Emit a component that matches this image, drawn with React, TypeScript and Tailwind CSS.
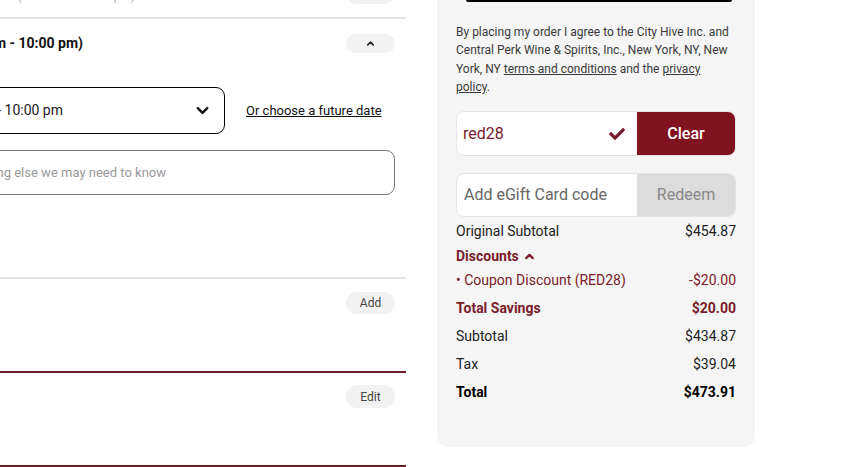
import { ChevronDown, ChevronUp } from 'lucide-react';
import { FaCheck } from 'react-icons/fa';

const maroon = 'text-[#7a1b2b]';

function Pill({ children, className = '' }: { children?: React.ReactNode; className?: string }) {
  return (
    <button
      className={`flex items-center justify-center w-[49px] rounded-full bg-[#f2f2f2] text-[12px] text-[#444] ${className}`}
    >
      {children}
    </button>
  );
}

function Row({
  label,
  value,
  className = '',
  labelClass = '',
}: {
  label: React.ReactNode;
  value?: string;
  className?: string;
  labelClass?: string;
}) {
  return (
    <div className={`h-[20px] flex items-center justify-between text-[14px] ${className}`}>
      <span className={labelClass}>{label}</span>
      {value && <span>{value}</span>}
    </div>
  );
}

export default function App() {
  return (
    <div className="w-[862px] h-[467px] overflow-hidden bg-white flex items-start font-['Roboto','Liberation_Sans',sans-serif] text-[#222]">
      {/* checkout steps */}
      <div className="w-[406px] shrink-0 flex flex-col">
        <div className="h-[17px] flex justify-between items-start">
          <div className="w-[135px] h-[3px] overflow-hidden">
            <div className="-mt-[11px] flex justify-end whitespace-nowrap text-[12px] leading-[14px] text-[#aaa]">
              (10:00 am - 10:00 pm)
            </div>
          </div>
          <Pill className="-mt-[18px] h-[22px] mr-[11px]" />
        </div>
        <div className="h-[2px] bg-[#e2e2e2]" />

        <div className="mt-[15px] h-[19px] flex items-center justify-between">
          <div className="w-[83px] flex justify-end whitespace-nowrap text-[14px] font-bold text-[#111]">
            Today (10:00 am - 10:00 pm)
          </div>
          <Pill className="h-[19px] mr-[11px]">
            <ChevronUp size={11} strokeWidth={3.5} className="text-[#222]" />
          </Pill>
        </div>

        <div className="mt-[34px] flex items-center">
          <div className="-ml-[20px] w-[245px] h-[47px] shrink-0 border border-black rounded-[9px] flex items-center pr-[12px]">
            <div className="w-[82px] flex justify-end whitespace-nowrap text-[14px] text-[#222]">
              Today, 10:00 am - 10:00 pm
            </div>
            <div className="flex-1" />
            <ChevronDown size={19} strokeWidth={3} className="text-[#111]" />
          </div>
          <a className="ml-[21px] text-[13px] underline text-[#111] whitespace-nowrap">Or choose a future date</a>
        </div>

        <div className="mt-[16px] -ml-[20px] w-[415px] h-[45px] border border-[#777] rounded-[9px] flex items-center">
          <div className="w-[185px] flex justify-end whitespace-nowrap text-[13px] text-[#999]">
            Gate code, delivery instructions or anything else we may need to know
          </div>
        </div>

        <div className="mt-[82px] h-[2px] bg-[#e2e2e2]" />
        <Pill className="mt-[13px] h-[22px] self-end mr-[11px]">Add</Pill>
        <div className="mt-[57px] h-[2px] bg-[#6e1d2b]" />
        <Pill className="mt-[12px] h-[23px] self-end mr-[11px]">Edit</Pill>
        <div className="mt-[57px] h-[2px] bg-[#6e1d2b]" />
      </div>

      {/* order summary */}
      <div className="ml-[31px] w-[318px] shrink-0 bg-[#f5f5f5] rounded-b-[12px] px-[19px] pb-[45px]">
        <div className="ml-[10px] w-[266px] h-[2px] bg-black rounded-b-[2px]" />

        <p className="mt-[21px] text-[12px] leading-[18.3px] text-[#3a3a3a]">
          By placing my order I agree to the City Hive Inc. and Central Perk Wine &amp; Spirits, Inc., New York, NY, New
          York, NY <a className="underline">terms and conditions</a> and the <a className="underline">privacy policy</a>.
        </p>

        <div className="mt-[15px] h-[45px] flex rounded-[8px] overflow-hidden border border-[#e4e4e4] bg-white">
          <div className={`flex-1 flex items-center pl-[6px] pr-[12px] text-[16px] ${maroon}`}>
            <span className="flex-1">red28</span>
            <FaCheck size={16} className="text-[#7a1b2b]" />
          </div>
          <button className="w-[98px] bg-[#80131f] text-white text-[16px] font-medium">Clear</button>
        </div>

        <div className="mt-[17px] h-[44px] flex rounded-[8px] overflow-hidden border border-[#e4e4e4] bg-white">
          <div className="flex-1 flex items-center pl-[7px] text-[16px] text-[#666]">Add eGift Card code</div>
          <button className="w-[98px] bg-[#dcdcdc] text-[#888] text-[16px]">Redeem</button>
        </div>

        <div className="mt-[4px] flex flex-col">
          <Row label="Original Subtotal" value="$454.87" />
          <Row
            className={`mt-[5px] font-bold ${maroon}`}
            label={
              <span className="flex items-center gap-[4px]">
                Discounts
                <ChevronUp size={13} strokeWidth={4} />
              </span>
            }
          />
          <Row className={`mt-[4px] ${maroon}`} label="• Coupon Discount (RED28)" value="-$20.00" />
          <Row className={`mt-[8px] font-bold ${maroon}`} label="Total Savings" value="$20.00" />
          <Row className="mt-[8px]" label="Subtotal" value="$434.87" />
          <Row className="mt-[8px]" label="Tax" value="$39.04" />
          <Row className="mt-[8px] font-bold text-black" label="Total" value="$473.91" />
        </div>
      </div>
    </div>
  );
}
